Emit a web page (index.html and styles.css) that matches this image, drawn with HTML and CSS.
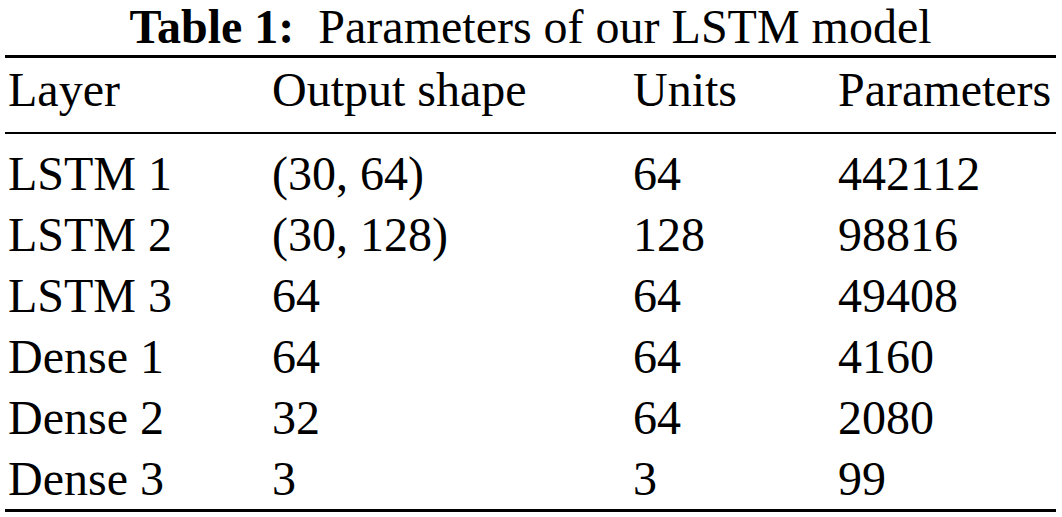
FILE: index.html
```html
<!DOCTYPE html>
<html lang="en">
<head>
  <meta charset="utf-8"/>
  <meta name="viewport" content="width=device-width, initial-scale=1.0"/>
  <title>Table 1: Parameters of our LSTM model</title>
  <link rel="stylesheet" href="styles.css">
</head>
<body>
  <div class="page">
    <p class="caption"><b>Table 1:</b>&nbsp; Parameters of our LSTM model</p>

    <table class="params">
      <colgroup>
        <col class="c-layer">
        <col class="c-shape">
        <col class="c-units">
        <col class="c-params">
      </colgroup>
      <thead>
        <tr>
          <th>Layer</th>
          <th>Output shape</th>
          <th>Units</th>
          <th>Parameters</th>
        </tr>
      </thead>
      <tbody>
        <tr><td>LSTM 1</td><td>(30, 64)</td><td>64</td><td>442112</td></tr>
        <tr><td>LSTM 2</td><td>(30, 128)</td><td>128</td><td>98816</td></tr>
        <tr><td>LSTM 3</td><td>64</td><td>64</td><td>49408</td></tr>
        <tr><td>Dense 1</td><td>64</td><td>64</td><td>4160</td></tr>
        <tr><td>Dense 2</td><td>32</td><td>64</td><td>2080</td></tr>
        <tr><td>Dense 3</td><td>3</td><td>3</td><td>99</td></tr>
      </tbody>
    </table>
  </div>
</body>
</html>
```

FILE: styles.css
```css
body {
  margin: 0;
  background: #fff;
  color: #000;
  font-family: "Liberation Serif", "Times New Roman", serif;
  font-size: 48px;
}
.page { padding: 0 6px 0 5px; }

.caption {
  margin: 0 0 2px;
  line-height: 53px;
  text-align: center;
}

.params {
  width: 100%;
  border-collapse: collapse;
  table-layout: fixed;
  border-top: 3px solid #000;
  border-bottom: 3px solid #000;
}
.c-layer { width: 264px; }
.c-shape { width: 361px; }
.c-units { width: 205px; }

.params th,
.params td {
  padding: 0 0 0 3px;
  text-align: left;
  font-weight: normal;
  line-height: 61px;
  white-space: nowrap;
}
.params thead th {
  line-height: 58px;
  padding-top: 3px;
  padding-bottom: 13px;
  border-bottom: 2px solid #000;
}
.params tbody tr:first-child td { padding-top: 9px; }
```
